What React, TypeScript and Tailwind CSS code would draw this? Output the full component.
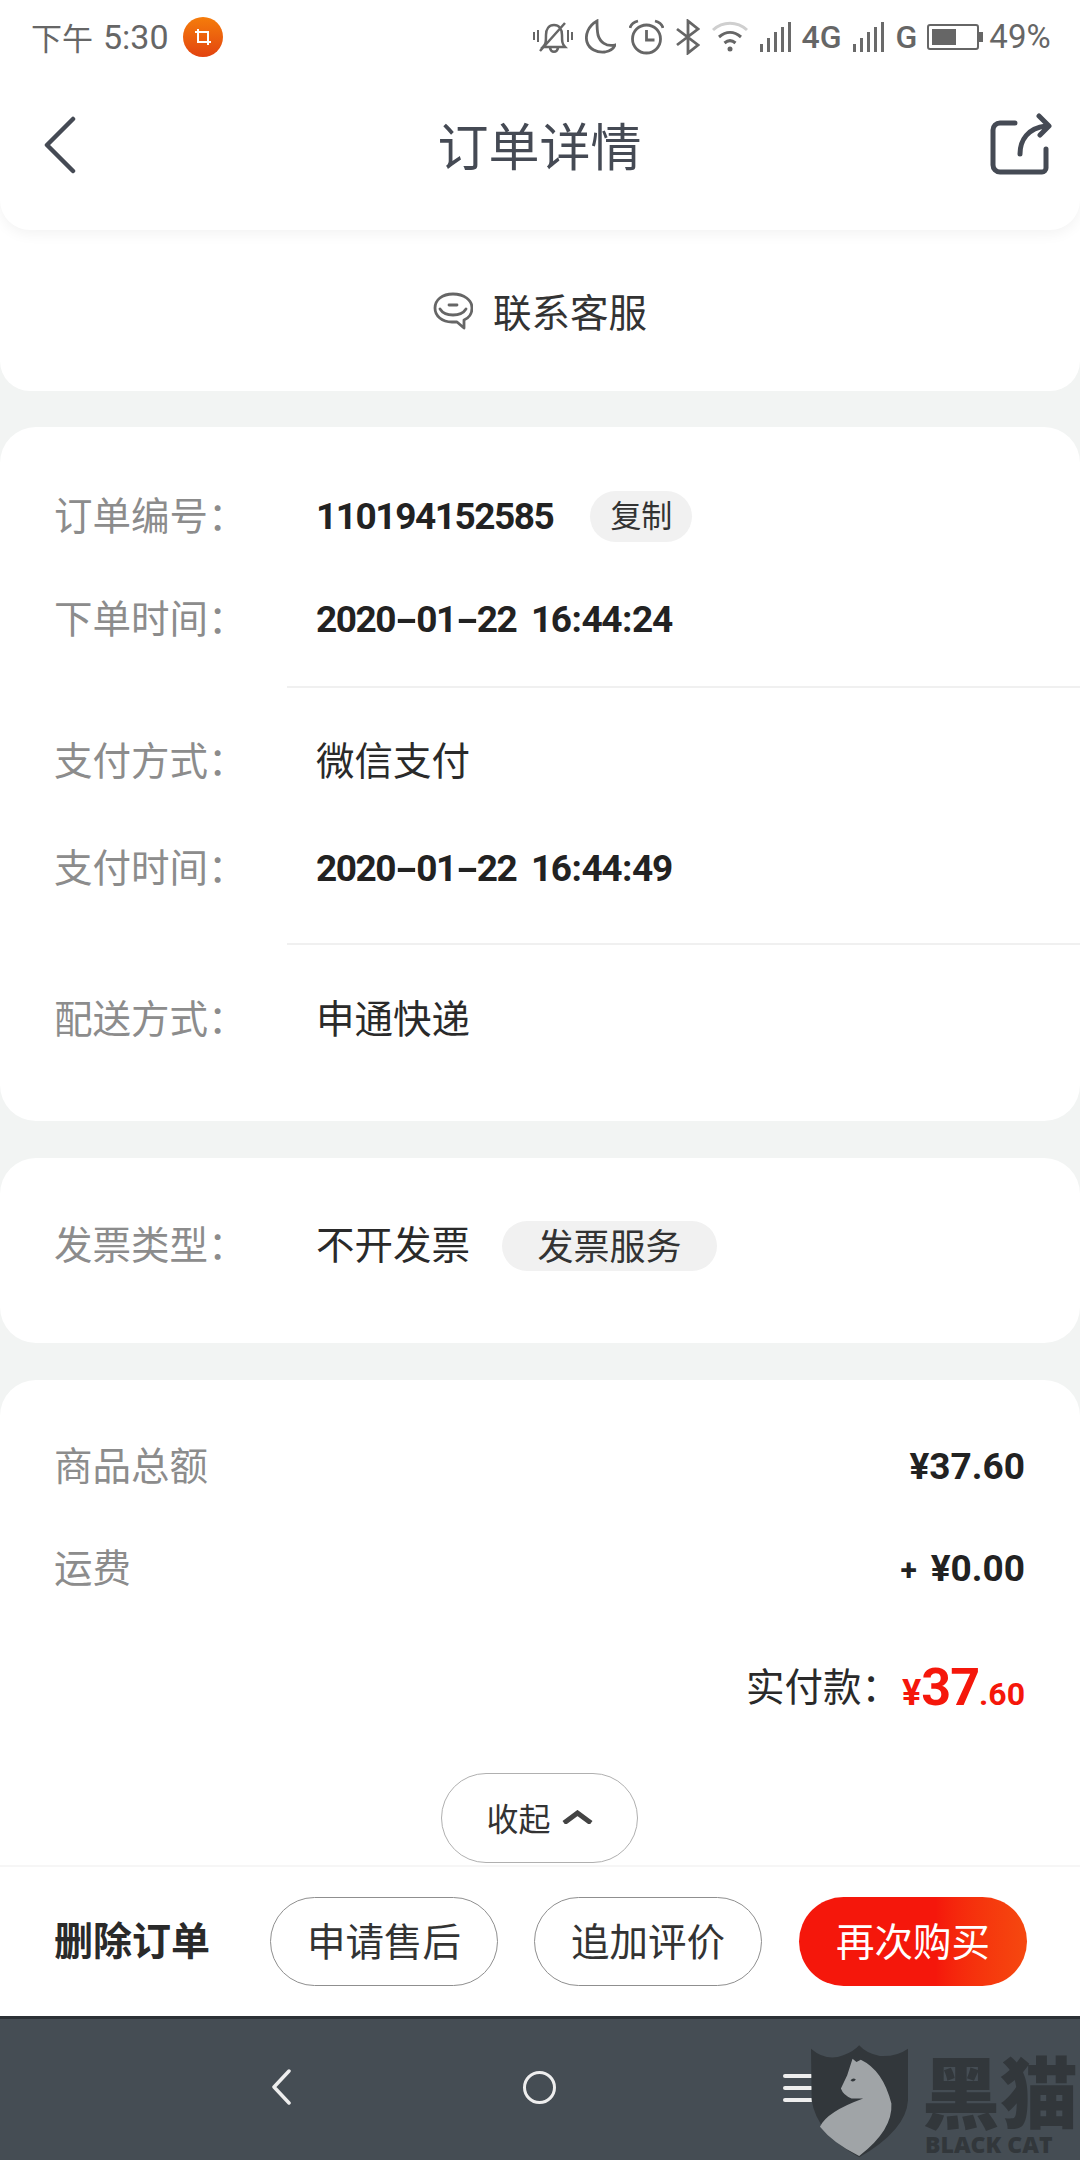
const numFont = "font-['Roboto',sans-serif]";

// the date strings in the reference have wide dashes and a wide space
const Num = ({ value }: { value: string }) => (
  <span className={`${numFont} whitespace-pre text-[37px] font-bold tracking-[-1.45px] text-[#222222]`}>
    {value.split("").map((c, i) =>
      c === "-" ? (
        <span key={i} className="inline-block w-[21px] scale-x-[1.7] text-center">{c}</span>
      ) : c === ":" ? (
        <span key={i} className="mx-[1px]">{c}</span>
      ) : c === " " ? (
        <span key={i} className="mr-[7px]">{c}</span>
      ) : (
        c
      )
    )}
  </span>
);

const InfoRow = ({ label, value, bold, className, children }: { label: string; value: string; bold?: boolean; className: string; children?: React.ReactNode }) => (
  <div className={`flex items-center pl-[54px] ${className}`}>
    <span className="w-[262px] pb-[6px] text-[38.5px] text-[#8c8c8c]">{label}{"\uFF1A"}</span>
    {bold ? <Num value={value} /> : <span className="pb-[6px] text-[38.5px] text-[#2a2a2a]">{value}</span>}
    {children}
  </div>
);

const Signal = () => (
  <svg width="31" height="30" viewBox="0 0 31 30" fill="#6a6a6a">
    <rect x="0" y="22" width="3" height="8" />
    <rect x="7" y="16" width="3" height="14" />
    <rect x="14" y="10" width="3" height="20" />
    <rect x="21" y="5" width="3" height="25" />
    <rect x="28" y="0" width="3" height="30" />
  </svg>
);

const StatusBar = () => (
  <div className="flex h-[70px] items-center pl-[31px] pt-[3px] text-[#666666]">
    <span className="text-[31px] leading-none">下午</span>
    <span className={`${numFont} ml-[10px] text-[34px] leading-none`}>5:30</span>
    <div className="ml-[14px] flex h-[40px] w-[40px] items-center justify-center rounded-full bg-gradient-to-b from-[#f57c0a] to-[#e2420f]">
      <svg width="20" height="20" viewBox="0 0 20 20" fill="none" stroke="#ffffff" strokeWidth="2">
        <path d="M2 5H15V18M5 2V15H18" />
      </svg>
    </div>
    <svg className="ml-[310px]" width="40" height="36" viewBox="0 0 40 36" fill="none" stroke="#666666" strokeWidth="2.5">
      <path d="M10 28c3-3 3-6 3-12 0-6 3-10 8-10s8 4 8 10c0 6 0 9 3 12zM17 29c1 5 7 5 8 0M7 32L32 4" />
      <path d="M1 13v8M5 11v12M35 11v12M39 13v8" strokeWidth="2" />
    </svg>
    <svg className="ml-[12px]" width="31" height="36" viewBox="0 0 31 36" fill="none" stroke="#666666" strokeWidth="2.8">
      <path d="M12 2C3 7 0 16 2 23c2 7 10 11 18 10 5-1 9-4 10-7-9 2-15-3-17-10-1-5-1-10-1-14z" />
    </svg>
    <svg className="ml-[13px]" width="35" height="36" viewBox="0 0 35 36" fill="none" stroke="#666666" strokeWidth="2.8">
      <circle cx="17.5" cy="20" r="14" />
      <path d="M17.5 11v10h8M1 9c1-4 4-6 8-7M34 9c-1-4-4-6-8-7" />
    </svg>
    <svg className="ml-[12px]" width="24" height="36" viewBox="0 0 24 36" fill="none" stroke="#666666" strokeWidth="2.8">
      <path d="M1 10l21 16-10 8V2l10 8L1 26" />
    </svg>
    <svg className="ml-[12px]" width="36" height="32" viewBox="0 0 36 32" fill="none" strokeWidth="3">
      <path d="M1 9c10-9 24-9 34 0" stroke="#cfcfcf" />
      <path d="M7 16c7-6 15-6 22 0M12.5 22c3.500-3 7.500-3 11 0" stroke="#666666" />
      <circle cx="18" cy="28" r="2.500" fill="#666666" />
    </svg>
    <div className="ml-[12px]"><Signal /></div>
    <span className={`${numFont} ml-[11px] text-[32px] font-medium leading-none`}>4G</span>
    <div className="ml-[11px]"><Signal /></div>
    <span className={`${numFont} ml-[12px] text-[32px] font-medium leading-none`}>G</span>
    <svg className="ml-[10px]" width="56" height="26" viewBox="0 0 56 26">
      <rect x="1" y="1" width="50" height="24" rx="2" fill="none" stroke="#666666" strokeWidth="2" />
      <rect x="5" y="5" width="24" height="16" fill="#666666" />
      <rect x="52" y="8" width="4" height="10" fill="#666666" />
    </svg>
    <span className={`${numFont} ml-[6px] text-[33px] leading-none`}>49%</span>
  </div>
);

const Header = () => (
  <div className="relative z-10 rounded-b-[30px] bg-white shadow-[0_4px_14px_rgba(0,0,0,0.05)]">
    <StatusBar />
    <div className="flex h-[160px] items-start justify-between pl-[43px] pr-[28px]">
      <svg className="mt-[46px]" width="33" height="58" viewBox="0 0 33 58" fill="none" stroke="#454a54" strokeWidth="4.500" strokeLinecap="round" strokeLinejoin="round">
        <path d="M30 3L4 29l26 26" />
      </svg>
      <span className="ml-[13px] mt-[37px] text-[51px] leading-[74px] text-[#454a54]">订单详情</span>
      <svg className="mt-[43px]" width="62" height="62" viewBox="0 0 62 62" fill="none" stroke="#454a54" strokeWidth="5" strokeLinecap="round" strokeLinejoin="round">
        <path d="M25 10H10a7 7 0 0 0-7 7v35a7 7 0 0 0 7 7h42a4 4 0 0 0 4-4V36" />
        <path d="M30 41c0-14 8-26 26-28M49 3l10 10-9 9" />
      </svg>
    </div>
  </div>
);

const Watermark = () => (
  <div className="absolute bottom-0 left-[811px] h-[144px] w-[269px] overflow-hidden">
    <svg className="absolute left-0 top-[29px]" width="97" height="113" viewBox="153 75 292 338">
      <path d="M153 85Q200 125 250 105Q280 95 298 75Q320 100 360 107Q410 110 445 85L445 240Q440 330 298 412Q170 340 155 240Z" fill="#32373b" />
      <path d="M278 115L290 125L303 118Q370 150 395 250Q400 330 298 408Q220 370 180 320Q200 275 310 235L275 235Q250 225 243 205L262 165Z" fill="#a0a4a7" />
      <path d="M272 180Q280 170 288 178Q280 188 272 180Z" fill="#32373b" />
    </svg>
    <span className="absolute left-[111px] top-[38px] whitespace-nowrap text-[78px] font-black leading-[70px] text-[#32373b]">黑猫</span>
    <span className="absolute left-[114px] top-[115px] whitespace-nowrap font-['Open_Sans',sans-serif] text-[23px] font-extrabold leading-[26px] text-[#32373b]">BLACK CAT</span>
  </div>
);

const App = () => (
  <div className="relative h-[2160px] w-[1080px] overflow-hidden bg-[#f2f4f3] font-['Noto_Sans_CJK_SC',sans-serif]">
    <Header />

    <div className="-mt-[30px] flex h-[191px] items-center justify-center rounded-b-[30px] bg-white pt-[30px]">
      <svg width="40" height="38" viewBox="0 0 40 38" fill="none" stroke="#666666" strokeWidth="2.800" strokeLinecap="round" strokeLinejoin="round">
        <path d="M20 2C9 2 2 8 2 16c0 8 7 14 17 14h5l7 6v-8c5-2 8-7 8-12C39 8 31 2 20 2z" />
        <path d="M7 17c5 8 21 8 26 0M16 13h8" />
      </svg>
      <span className="ml-[20px] text-[38.5px] text-[#333333]">联系客服</span>
    </div>

    <div className="mt-[36px] h-[694px] rounded-[36px] bg-white pt-[38px]">
      <InfoRow label="订单编号" value="110194152585" bold className="h-[103px]">
        <span className="ml-[37px] flex h-[51px] w-[102px] items-center justify-center rounded-full bg-[#f1f1f1] pb-[4px] text-[31px] text-[#333333]">复制</span>
      </InfoRow>
      <InfoRow label="下单时间" value="2020-01-22 16:44:24" bold className="h-[103px]" />
      <div className="ml-[287px] mt-[15px] h-[2px] bg-[#f0f0f0]" />
      <div className="h-[20px]" />
      <InfoRow label="支付方式" value="微信支付" className="h-[107px]" />
      <InfoRow label="支付时间" value="2020-01-22 16:44:49" bold className="h-[107px]" />
      <div className="ml-[287px] mt-[21px] h-[2px] bg-[#f0f0f0]" />
      <InfoRow label="配送方式" value="申通快递" className="mt-[25px] h-[100px]" />
    </div>

    <div className="mt-[37px] flex h-[185px] items-center rounded-[36px] bg-white pb-[10px]">
      <InfoRow label="发票类型" value="不开发票" className="h-[100px]">
        <span className="ml-[32px] flex h-[50px] w-[215px] items-center justify-center rounded-full bg-[#f1f1f1] pb-[4px] text-[36px] text-[#333333]">发票服务</span>
      </InfoRow>
    </div>

    <div className="mt-[37px] h-[485px] rounded-t-[36px] bg-white pl-[54px] pr-[55px] pt-[35px]">
      <div className="flex h-[104px] items-center justify-between">
        <span className="pb-[6px] text-[38.5px] text-[#8c8c8c]">商品总额</span>
        <span className={`${numFont} text-[37px] font-bold text-[#222222]`}>¥37.60</span>
      </div>
      <div className="flex h-[100px] items-center justify-between">
        <span className="pb-[6px] text-[38.5px] text-[#8c8c8c]">运费</span>
        <span className={`${numFont} flex items-center text-[37px] font-bold text-[#222222]`}>
          <span className="mr-[14px] text-[30px]">+</span>¥0.00
        </span>
      </div>
      <div className="mt-[29px] flex h-[80px] items-center justify-end">
        <span className="mr-[2px] pb-[6px] text-[38.5px] text-[#2a2a2a]">实付款{"\uFF1A"}</span>
        <span className={`${numFont} flex items-baseline font-bold text-[#f5170b]`}>
          <span className="text-[36px]">¥</span>
          <span className="text-[52px] tracking-[-1px]">37</span>
          <span className="text-[32px]">.60</span>
        </span>
      </div>
      <div className="mt-[45px] flex justify-center">
        <div className="flex h-[90px] w-[197px] items-center justify-center gap-[11px] rounded-[45px] border border-[#b0b0b0] pb-[2px] text-[32px] text-[#333333]">
          <span>收起</span>
          <svg width="31" height="14" viewBox="0 0 31 14" fill="none" stroke="#444444" strokeWidth="5">
            <path d="M2 13L15.500 3 29 13" />
          </svg>
        </div>
      </div>
    </div>

    <div className="flex h-[151px] items-center border-t-[2px] border-[#f6f6f6] bg-white pl-[54px]">
      <span className="w-[216px] pb-[6px] text-[39px] font-bold text-[#2a2a2a]">删除订单</span>
      <button className="h-[89px] w-[228px] rounded-[45px] border border-[#8f8f8f] pb-[4px] text-[38.5px] text-[#333333]">申请售后</button>
      <button className="ml-[36px] h-[89px] w-[228px] rounded-[45px] border border-[#8f8f8f] pb-[4px] text-[38.5px] text-[#333333]">追加评价</button>
      <button className="ml-[37px] h-[89px] w-[228px] rounded-[45px] bg-gradient-to-r from-[#f5170b] from-[60%] to-[#f6480f] pb-[4px] text-[38.5px] text-white">再次购买</button>
    </div>

    <div className="relative h-[144px] border-t-[3px] border-[#2c3136] bg-[#454d54]">
      <svg className="absolute left-[271px] top-[50px]" width="20" height="36" viewBox="0 0 20 36" fill="none" stroke="#eeeeee" strokeWidth="3.500" strokeLinecap="round" strokeLinejoin="round">
        <path d="M18 2L3 18l15 16" />
      </svg>
      <div className="absolute left-[523px] top-[52px] h-[33px] w-[33px] rounded-full border-[3px] border-[#eeeeee]" />
      <div className="absolute left-[783px] top-[55px] flex w-[30px] flex-col gap-[8px]">
        <div className="h-[4px] rounded-full bg-[#eeeeee]" />
        <div className="h-[4px] rounded-full bg-[#eeeeee]" />
        <div className="h-[4px] rounded-full bg-[#eeeeee]" />
      </div>
    </div>
    <Watermark />
  </div>
);

export default App;
